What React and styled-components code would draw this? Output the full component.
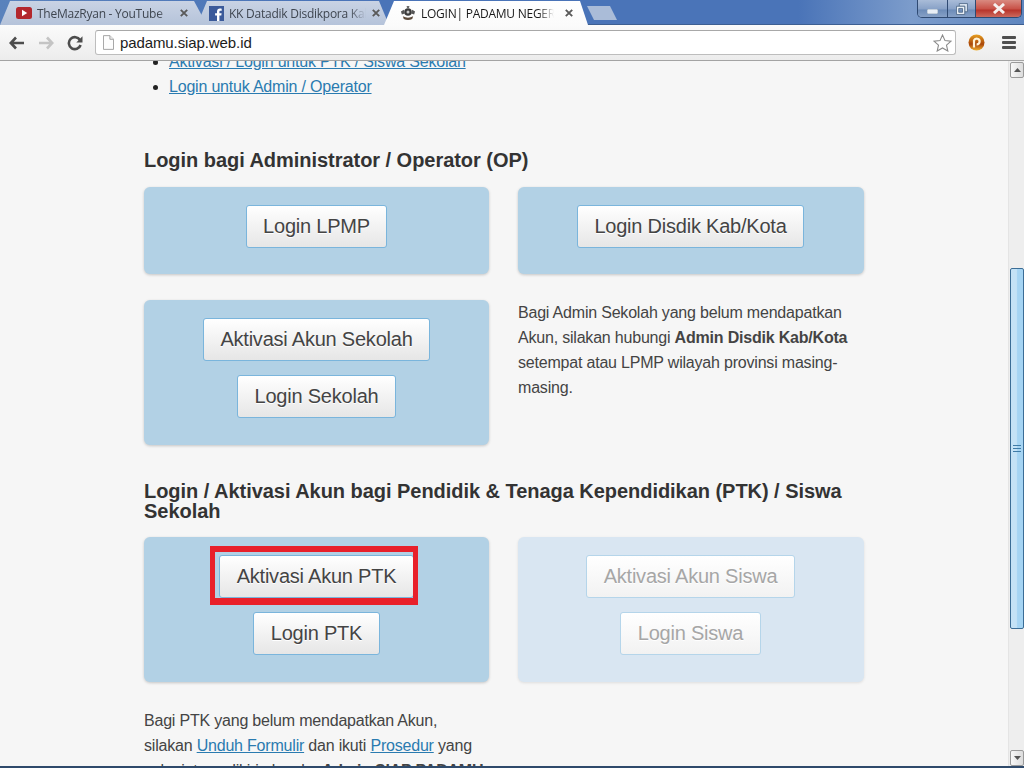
import styled, { createGlobalStyle } from "styled-components";

const GlobalStyle = createGlobalStyle`
    html, body {
        margin: 0;
        padding: 0;
        width: 1024px;
        height: 768px;
        overflow: hidden;
        background: #f6f6f6;
    }
    * { box-sizing: border-box; }
`;

const Window = styled.div`
    width: 1024px;
    height: 768px;
    display: flex;
    flex-direction: column;
    overflow: hidden;
    font-family: "Liberation Sans", Arial, sans-serif;
    border-bottom: 2px solid #2f4a6b;
`;

/* browser chrome */
const TabStrip = styled.div`
    height: 25px;
    flex: none;
    display: flex;
    align-items: flex-end;
    background: linear-gradient(90deg, #5a82bc 0%, #4a74b8 30%, #4a74b8 78%, #7c9ccb 89%, #5f86bf 100%);
    box-shadow: inset 0 -1px 0 #3d5f92;
`;

const Tab = styled.div`
    position: relative;
    width: ${(p) => p.$width}px;
    margin-left: ${(p) => p.$overlap || 0}px;
    z-index: ${(p) => (p.$active ? 2 : 1)};
    height: 24px;
    flex: none;
    display: flex;
    align-items: center;
    gap: 5px;
    padding: 0 ${(p) => p.$padRight}px 0 ${(p) => p.$padLeft}px;
    clip-path: polygon(${(p) => p.$slopeLeft}px 0, calc(100% - ${(p) => p.$slopeRight}px) 0, 100% 100%, 0 100%);
    background: ${(p) => (p.$active ? "linear-gradient(#ffffff, #fbfbfb)" : "linear-gradient(#c9d3e4, #b5c3da)")};
    font-family: "Open Sans", "Noto Sans", sans-serif;
    font-size: 12px;
    letter-spacing: -0.25px;
    color: ${(p) => (p.$active ? "#1a1a1a" : "#3f4650")};
`;

const TabTitle = styled.span`
    flex: 1;
    min-width: 0;
    white-space: nowrap;
    overflow: hidden;
    -webkit-mask-image: linear-gradient(90deg, #000 88%, transparent 100%);
    mask-image: linear-gradient(90deg, #000 88%, transparent 100%);
`;

const TabClose = styled.span`
    flex: none;
    width: 10px;
    margin-left: ${(p) => p.$gap || 0}px;
    display: flex;
    align-items: center;
    justify-content: center;
`;

const NewTab = styled.div`
    width: 30px;
    height: 14px;
    flex: none;
    margin: 0 0 5px -1px;
    clip-path: polygon(0 0, 23px 0, 100% 100%, 7px 100%);
    background: #aabcd8;
`;

const WindowControls = styled.div`
    margin-left: auto;
    margin-right: 2px;
    align-self: flex-start;
    display: flex;
    height: 18px;
    border: 1px solid #2f4a72;
    border-top: none;
    border-radius: 0 0 5px 5px;
    overflow: hidden;
`;

const ControlButton = styled.div`
    width: ${(p) => p.$width}px;
    display: flex;
    align-items: center;
    justify-content: center;
    background: ${(p) =>
        p.$close
            ? "linear-gradient(#d98a80 0%, #c9544a 50%, #b8352c 60%, #cc6a5e 100%)"
            : "linear-gradient(#a9bcd8 0%, #8aa3c8 50%, #6d8cb8 60%, #86a0c6 100%)"};
    & + & { border-left: 1px solid #2f4a72; }
`;

const Toolbar = styled.div`
    height: 36px;
    flex: none;
    display: flex;
    align-items: center;
    padding-left: 2px;
    background: linear-gradient(#fbfbfb, #ececec);
    border-bottom: 1px solid #a3a3a3;
`;

const NavButton = styled.div`
    width: 29px;
    height: 24px;
    flex: none;
    display: flex;
    align-items: center;
    justify-content: center;
`;

const Omnibox = styled.div`
    flex: 1;
    height: 25px;
    margin: 0 2px 0 6px;
    display: flex;
    align-items: center;
    gap: 7px;
    padding: 0 3px 0 7px;
    background: #fff;
    border: 1px solid #bdbdbd;
    border-top-color: #a8a8a8;
    border-radius: 3px;
    font-size: 15px;
    letter-spacing: -0.1px;
    color: #1c1c1c;
`;

const Url = styled.span`
    flex: 1;
    margin-left: -1px;
`;

const ExtButton = styled.div`
    width: ${(p) => p.$width}px;
    height: 24px;
    flex: none;
    display: flex;
    align-items: center;
    justify-content: center;
`;

/* page */
const Viewport = styled.div`
    flex: 1;
    min-height: 0;
    display: flex;
    background: #f6f6f6;
`;

const PageArea = styled.div`
    flex: 1;
    min-width: 0;
    overflow: hidden;
`;

const Content = styled.div`
    width: 720px;
    margin: -12px 0 0 144px;
    font-size: 16px;
    line-height: 25px;
    letter-spacing: -0.2px;
    color: #444;
`;

const LinkList = styled.ul`
    margin: 0 0 51px;
    padding: 0 0 0 25px;
    color: #222;
`;

const Link = styled.a`
    color: #2a7bb0;
    text-decoration: underline;
`;

const Heading = styled.h2`
    margin: ${(p) => p.$top || 0}px 0 ${(p) => p.$bottom}px;
    font-size: 20px;
    line-height: 20px;
    font-weight: 700;
    letter-spacing: -0.04px;
    color: #333;
`;

const CardGrid = styled.div`
    display: grid;
    grid-template-columns: 345px 346px;
    column-gap: 29px;
    row-gap: 26px;
`;

const Card = styled.div`
    display: flex;
    flex-direction: column;
    align-items: center;
    gap: 14px;
    padding: 18px ${(p) => (p.$right ? 1 : 0)}px ${(p) => (p.$single ? 26 : 27)}px 0;
    border-radius: 6px;
    background: ${(p) => (p.$disabled ? "#d9e6f2" : "#b2d1e5")};
    box-shadow: 0 1px 3px rgba(0, 0, 0, ${(p) => (p.$disabled ? 0.1 : 0.2)});
`;

const Button = styled.div`
    position: relative;
    height: 43px;
    padding: 0 16.5px;
    display: flex;
    align-items: center;
    font-size: 20px;
    letter-spacing: -0.22px;
    white-space: nowrap;
    border-radius: 3px;
    border: 1px solid ${(p) => (p.$disabled ? "#b5d5ea" : "#7ab5dc")};
    background: ${(p) => (p.$disabled ? "linear-gradient(#ffffff, #f2f2f2)" : "linear-gradient(#ffffff, #e6e6e6)")};
    color: ${(p) => (p.$disabled ? "#a6a6a6" : "#444")};
    text-shadow: 0 1px 0 #fff;
`;

/* the red box somebody drew on the screenshot */
const Highlight = styled.div`
    position: absolute;
    left: -10px;
    top: -10px;
    width: 208px;
    height: 59px;
    border: 5px solid #e8202a;
    border-top-width: 6px;
    border-bottom-width: 7px;
`;

const Note = styled.p`
    margin: 0;
`;

/* scrollbar */
const Scrollbar = styled.div`
    width: 16px;
    flex: none;
    display: flex;
    flex-direction: column;
    padding: 1px 0 0 1px;
    background: #eeeeee;
    border-left: 1px solid #e4e4e4;
`;

const ScrollArrow = styled.div`
    width: 14px;
    height: 16px;
    flex: none;
    display: flex;
    align-items: center;
    justify-content: center;
    border: 1px solid #9a9a9a;
    border-radius: 2px;
    background: linear-gradient(90deg, #f8f8f8, #dcdcdc);
`;

const ScrollTrack = styled.div`
    flex: 1;
    min-height: 0;
`;

const ScrollThumb = styled.div`
    width: 14px;
    height: 361px;
    margin-top: 190px;
    display: flex;
    align-items: center;
    justify-content: center;
    border: 1px solid #3b6d96;
    border-radius: 2px;
    background: linear-gradient(90deg, #c4e2f6 0%, #c4e2f6 45%, #a5d4f3 55%, #a5d4f3 100%);
`;

const Grip = styled.div`
    width: 8px;
    height: 7px;
    background: repeating-linear-gradient(#3f7ca8 0, #3f7ca8 1px, transparent 1px, transparent 3px);
`;

const YouTubeIcon = () => (
    <svg width="16" height="12" viewBox="0 0 16 12">
        <rect width="16" height="12" rx="2.5" fill="#b3272d" />
        <path d="M6 2.8 L11.2 6 L6 9.2 Z" fill="#fff" />
    </svg>
);

const FacebookIcon = () => (
    <svg width="15" height="15" viewBox="0 0 15 15">
        <rect width="15" height="15" fill="#3b5a9a" />
        <path d="M10.4 15 V9.4 H12.3 L12.6 7.2 H10.4 V5.8 C10.4 5.1 10.7 4.7 11.5 4.7 H12.7 V2.7 C12.3 2.6 11.6 2.6 10.9 2.6 C9.2 2.6 8 3.6 8 5.5 V7.2 H6.1 V9.4 H8 V15 Z" fill="#fff" />
    </svg>
);

const CrestIcon = () => (
    <svg width="16" height="16" viewBox="0 0 17 17">
        <path d="M1 7 L4 5 L5 9 L2 10 Z M16 7 L13 5 L12 9 L15 10 Z" fill="#555" />
        <circle cx="8.5" cy="7.5" r="4" fill="#3a3a3a" />
        <circle cx="8.5" cy="7.5" r="1.6" fill="#c9c9c9" />
        <path d="M7 1 H10 L9.5 3.5 H7.5 Z" fill="#6b6b6b" />
        <path d="M3 12 Q8.5 15 14 12 L13 15 Q8.5 17 4 15 Z" fill="#5c4a3a" />
    </svg>
);

const TabCloseIcon = () => (
    <svg width="8" height="8" viewBox="0 0 8 8">
        <path d="M.8 .8 L7.2 7.2 M7.2 .8 L.8 7.2" stroke="#5a5a5a" strokeWidth="1.9" />
    </svg>
);

const BackIcon = ({ color }) => (
    <svg width="16" height="14" viewBox="0 0 16 14">
        <path d="M7 1.5 L1.8 7 L7 12.5 M2.5 7 H15" fill="none" stroke={color} strokeWidth="2.6" />
    </svg>
);

const ForwardIcon = ({ color }) => (
    <svg width="16" height="14" viewBox="0 0 16 14">
        <path d="M9 1.5 L14.2 7 L9 12.5 M13.5 7 H1" fill="none" stroke={color} strokeWidth="2.6" />
    </svg>
);

const ReloadIcon = () => (
    <svg width="16" height="16" viewBox="0 0 16 16">
        <path d="M13 5 A6 6 0 1 0 13.6 10" fill="none" stroke="#4d4d4d" strokeWidth="2.6" />
        <path d="M15.5 1.2 V7.4 H9.3 Z" fill="#4d4d4d" />
    </svg>
);

const PageIcon = () => (
    <svg width="11" height="15" viewBox="0 0 12 16">
        <path d="M.5 .5 H7.5 L11.5 4.5 V15.5 H.5 Z" fill="#fdfdfd" stroke="#9d9d9d" />
        <path d="M7.5 .5 V4.5 H11.5" fill="#eee" stroke="#9d9d9d" />
    </svg>
);

const StarIcon = () => (
    <svg width="19" height="18" viewBox="0 0 19 18">
        <path d="M9.5 1 L12 6.6 L18 7.2 L13.5 11.2 L14.8 17 L9.5 14 L4.2 17 L5.5 11.2 L1 7.2 L7 6.6 Z" fill="#fff" stroke="#8a8a8a" strokeWidth="1.1" />
    </svg>
);

const PocketIcon = () => (
    <svg width="17" height="17" viewBox="0 0 17 17">
        <defs>
            <linearGradient id="pocket" x1="0" y1="0" x2="0" y2="1">
                <stop offset="0" stopColor="#e8a020" />
                <stop offset="0.6" stopColor="#a9460a" />
                <stop offset="1" stopColor="#f0b030" />
            </linearGradient>
        </defs>
        <circle cx="8.5" cy="8.5" r="8" fill="url(#pocket)" />
        <path d="M6 13.5 V6.5 A2.9 2.9 0 1 1 8.6 10.4" fill="none" stroke="#fff3d8" strokeWidth="2.2" />
    </svg>
);

const MenuIcon = () => (
    <svg width="14" height="13" viewBox="0 0 14 13">
        <rect width="14" height="3" rx="1" fill="#4f4f4f" />
        <rect y="5" width="14" height="3" rx="1" fill="#4f4f4f" />
        <rect y="10" width="14" height="3" rx="1" fill="#4f4f4f" />
    </svg>
);

const MinimizeIcon = () => (
    <svg width="11" height="5" viewBox="0 0 11 5" style={{ marginTop: 6 }}>
        <rect width="11" height="5" rx="1" fill="#e8eef6" stroke="#56708f" strokeWidth=".5" />
    </svg>
);

const RestoreIcon = () => (
    <svg width="12" height="12" viewBox="0 0 11 11">
        <path d="M3 .5 H10.5 V8 H8 V3 H3 Z" fill="#dde6f1" stroke="#46607f" strokeWidth=".7" />
        <path d="M.5 3 H8 V10.5 H.5 Z M2.5 5 V8.5 H6 V5 Z" fill="#eef3f8" fillRule="evenodd" stroke="#46607f" strokeWidth=".7" />
    </svg>
);

const CloseIcon = () => (
    <svg width="14" height="11" viewBox="0 0 14 11">
        <path d="M2 1 L12 10 M12 1 L2 10" stroke="#f6f0ee" strokeWidth="3" />
    </svg>
);

const ArrowGlyph = ({ down }) => (
    <svg width="7" height="4" viewBox="0 0 7 4">
        <path d={down ? "M0 0 H7 L3.5 4 Z" : "M0 4 H7 L3.5 0 Z"} fill="#555" />
    </svg>
);

export default function App() {
    return (
        <Window>
            <GlobalStyle />
            <TabStrip>
                <Tab $width={207} $slopeLeft={10} $slopeRight={13} $padLeft={16} $padRight={18}>
                    <YouTubeIcon />
                    <TabTitle>TheMazRyan - YouTube</TabTitle>
                    <TabClose><TabCloseIcon /></TabClose>
                </Tab>
                <Tab $width={192} $overlap={-10} $slopeLeft={10} $slopeRight={10} $padLeft={12} $padRight={8}>
                    <FacebookIcon />
                    <TabTitle>KK Datadik Disdikpora Kab/Kota</TabTitle>
                    <TabClose><TabCloseIcon /></TabClose>
                </Tab>
                <Tab $active $width={204} $overlap={-5} $slopeLeft={10} $slopeRight={8} $padLeft={16} $padRight={14}>
                    <CrestIcon />
                    <TabTitle>LOGIN| PADAMU NEGERI</TabTitle>
                    <TabClose $gap={5}><TabCloseIcon /></TabClose>
                </Tab>
                <NewTab />
                <WindowControls>
                    <ControlButton $width={29}><MinimizeIcon /></ControlButton>
                    <ControlButton $width={28}><RestoreIcon /></ControlButton>
                    <ControlButton $width={46} $close><CloseIcon /></ControlButton>
                </WindowControls>
            </TabStrip>

            <Toolbar>
                <NavButton><BackIcon color="#4d4d4d" /></NavButton>
                <NavButton><ForwardIcon color="#c4c4c4" /></NavButton>
                <NavButton><ReloadIcon /></NavButton>
                <Omnibox>
                    <PageIcon />
                    <Url>padamu.siap.web.id</Url>
                    <StarIcon />
                </Omnibox>
                <ExtButton $width={36}><PocketIcon /></ExtButton>
                <ExtButton $width={30}><MenuIcon /></ExtButton>
            </Toolbar>

            <Viewport>
                <PageArea>
                    <Content>
                        <LinkList>
                            <li><Link>Aktivasi / Login untuk PTK / Siswa Sekolah</Link></li>
                            <li><Link>Login untuk Admin / Operator</Link></li>
                        </LinkList>

                        <Heading $bottom={17}>Login bagi Administrator / Operator (OP)</Heading>
                        <CardGrid>
                            <Card $single><Button>Login LPMP</Button></Card>
                            <Card $single $right><Button>Login Disdik Kab/Kota</Button></Card>
                            <Card>
                                <Button>Aktivasi Akun Sekolah</Button>
                                <Button>Login Sekolah</Button>
                            </Card>
                            <Note>
                                Bagi Admin Sekolah yang belum mendapatkan Akun, silakan hubungi{" "}
                                <b>Admin Disdik Kab/Kota</b> setempat atau LPMP wilayah provinsi masing-masing.
                            </Note>
                        </CardGrid>

                        <Heading $top={36} $bottom={16}>
                            Login / Aktivasi Akun bagi Pendidik &amp; Tenaga Kependidikan (PTK) / Siswa Sekolah
                        </Heading>
                        <CardGrid>
                            <Card>
                                <Button>
                                    Aktivasi Akun PTK
                                    <Highlight />
                                </Button>
                                <Button>Login PTK</Button>
                            </Card>
                            <Card $disabled $right>
                                <Button $disabled>Aktivasi Akun Siswa</Button>
                                <Button $disabled>Login Siswa</Button>
                            </Card>
                            <Note>
                                Bagi PTK yang belum mendapatkan Akun, silakan <Link>Unduh Formulir</Link> dan
                                ikuti <Link>Prosedur</Link> yang selanjutnya dikirimkan ke <b>Admin SIAP PADAMU</b>
                            </Note>
                        </CardGrid>
                    </Content>
                </PageArea>
                <Scrollbar>
                    <ScrollArrow><ArrowGlyph /></ScrollArrow>
                    <ScrollTrack>
                        <ScrollThumb><Grip /></ScrollThumb>
                    </ScrollTrack>
                    <ScrollArrow><ArrowGlyph down /></ScrollArrow>
                </Scrollbar>
            </Viewport>
        </Window>
    );
}
